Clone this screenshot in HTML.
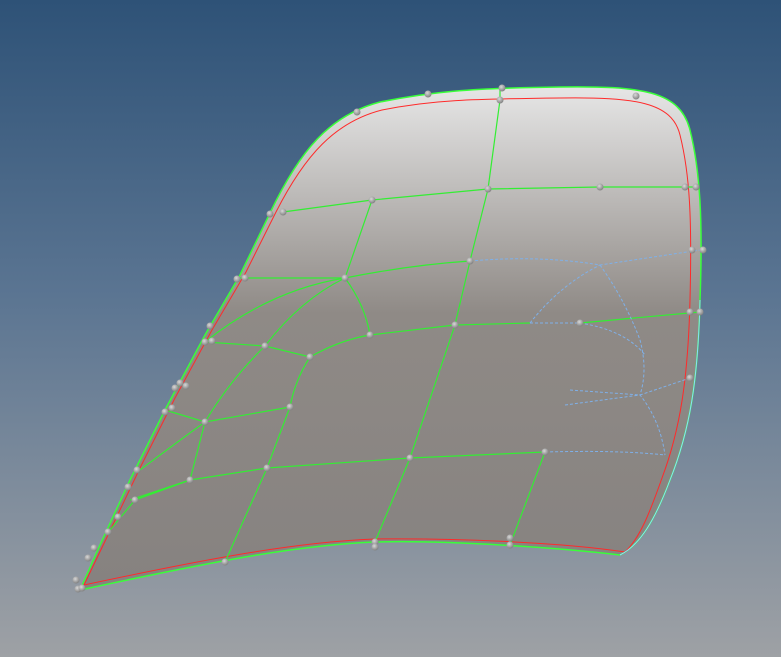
<!DOCTYPE html>
<html><head><meta charset="utf-8"><style>
html,body{margin:0;padding:0;width:781px;height:657px;overflow:hidden}
</style></head><body>
<svg width="781" height="657" viewBox="0 0 781 657" xmlns="http://www.w3.org/2000/svg">
<defs>
<linearGradient id="bg" x1="0" y1="0" x2="0" y2="1">
<stop offset="0" stop-color="#2e5277"/>
<stop offset="0.45" stop-color="#5b7592"/>
<stop offset="1" stop-color="#9ea1a5"/>
</linearGradient>
<linearGradient id="sf" x1="0" y1="0" x2="0" y2="1">
<stop offset="0" stop-color="#e6e6e6"/>
<stop offset="0.45" stop-color="#8f8a86"/>
<stop offset="1" stop-color="#868280"/>
</linearGradient>
<radialGradient id="dt" cx="0.4" cy="0.35" r="0.7">
<stop offset="0" stop-color="#d8d8d8"/><stop offset="1" stop-color="#7a7a7a"/>
</radialGradient>
</defs>
<rect width="781" height="657" fill="url(#bg)"/>
<path d="M80,590 L100,545 L130,480 L165,410 L205,335 L240,275 L270,213 C300,150 330,115 380,102 C430,92 470,88 560,87 C640,86 680,90 690,130 C700,170 703,220 700,300 C698,380 690,430 670,480 C655,520 640,545 620,555 C560,548 450,540 375,542 C300,545 220,560 80,590 Z" fill="url(#sf)" stroke="#39ff39" stroke-width="1.5"/>
<path d="M84,585 L108,535 L140,468 L175,398 L212,330 L246,272 L276,212 C305,155 335,122 382,110 C432,100 470,99 560,98 C635,97 672,102 680,135 C690,175 692,220 690,300 C688,380 680,430 662,478 C650,512 640,538 625,552 C560,542 450,538 375,539 C300,542 220,556 84,585" fill="none" stroke="#ff2a2a" stroke-width="1"/>
<path d="M620,555 C640,545 655,520 670,480 C690,430 698,380 700,300" fill="none" stroke="#8fd8ff" stroke-width="1"/>
<g fill="none" stroke="#33ee33" stroke-width="1.2">
<path d="M283,212 L372,200 L488,189 L600,187 L696,187"/>
<path d="M240,278 L345,278 Q410,265 470,261"/>
<path d="M205,342 L265,346 L310,357 Q340,340 370,335 L455,325 L530,323"/>
<path d="M580,323 L700,312"/>
<path d="M165,410 L205,422 L290,407"/>
<path d="M130,500 L190,480 L267,468 L410,458 L545,452"/>
<path d="M500,88 L500,100 L488,189 L470,261 L455,325 L410,458 L375,542"/>
<path d="M372,200 L345,278 Q365,305 370,335"/>
<path d="M345,278 Q300,300 265,346 Q230,380 205,422 L190,480"/>
<path d="M345,278 Q270,290 205,342"/>
<path d="M310,357 Q295,380 290,407 L267,468 L225,562"/>
<path d="M545,452 L510,545"/>
<path d="M140,470 Q180,440 205,422"/>
<path d="M110,530 L135,500 L190,480"/>
</g>
<g fill="none" stroke="#7fb0e8" stroke-width="1" stroke-dasharray="3,2">
<path d="M470,261 Q540,255 600,265 L700,250"/>
<path d="M530,323 L580,323"/>
<path d="M530,323 Q560,285 600,265"/>
<path d="M600,265 Q625,300 640,340 Q648,370 640,395"/>
<path d="M570,390 L640,395 L690,378"/>
<path d="M565,405 L640,395 Q660,420 665,455"/>
<path d="M545,452 Q620,450 665,455"/>
<path d="M580,323 Q625,330 645,355"/>
</g>
<g fill="url(#dt)">
<circle cx="502" cy="88" r="3.5"/><circle cx="500" cy="100" r="3.5"/><circle cx="428" cy="94" r="3.5"/><circle cx="357" cy="112" r="3.5"/><circle cx="636" cy="96" r="3.5"/>
<circle cx="283" cy="212" r="3.5"/><circle cx="270" cy="214" r="3.5"/><circle cx="372" cy="200" r="3.5"/><circle cx="488" cy="189" r="3.5"/><circle cx="600" cy="187" r="3.5"/><circle cx="685" cy="187" r="3.5"/><circle cx="696" cy="187" r="3.5"/>
<circle cx="245" cy="278" r="3.5"/><circle cx="237" cy="279" r="3.5"/><circle cx="345" cy="278" r="3.5"/><circle cx="470" cy="261" r="3.5"/><circle cx="703" cy="250" r="3.5"/><circle cx="692" cy="250" r="3.5"/>
<circle cx="205" cy="342" r="3.5"/><circle cx="212" cy="341" r="3.5"/><circle cx="210" cy="326" r="3.5"/><circle cx="265" cy="346" r="3.5"/><circle cx="310" cy="357" r="3.5"/><circle cx="370" cy="335" r="3.5"/><circle cx="455" cy="325" r="3.5"/><circle cx="580" cy="323" r="3.5"/><circle cx="700" cy="312" r="3.5"/><circle cx="690" cy="312" r="3.5"/>
<circle cx="180" cy="383" r="3.5"/><circle cx="186" cy="386" r="3.5"/><circle cx="175" cy="388" r="3.5"/><circle cx="690" cy="378" r="3.5"/>
<circle cx="165" cy="412" r="3.5"/><circle cx="172" cy="408" r="3.5"/><circle cx="205" cy="422" r="3.5"/><circle cx="290" cy="407" r="3.5"/>
<circle cx="267" cy="468" r="3.5"/><circle cx="410" cy="458" r="3.5"/><circle cx="545" cy="452" r="3.5"/><circle cx="190" cy="480" r="3.5"/><circle cx="137" cy="470" r="3.5"/>
<circle cx="128" cy="487" r="3.5"/><circle cx="135" cy="500" r="3.5"/><circle cx="118" cy="517" r="3.5"/><circle cx="108" cy="532" r="3.5"/><circle cx="94" cy="548" r="3.5"/><circle cx="88" cy="558" r="3.5"/>
<circle cx="76" cy="580" r="3.5"/><circle cx="78" cy="589" r="3.5"/><circle cx="82" cy="588" r="3.5"/>
<circle cx="225" cy="562" r="3.5"/><circle cx="375" cy="542" r="3.5"/><circle cx="375" cy="547" r="3.5"/><circle cx="510" cy="545" r="3.5"/><circle cx="510" cy="538" r="3.5"/>
</g>
</svg>
</body></html>
